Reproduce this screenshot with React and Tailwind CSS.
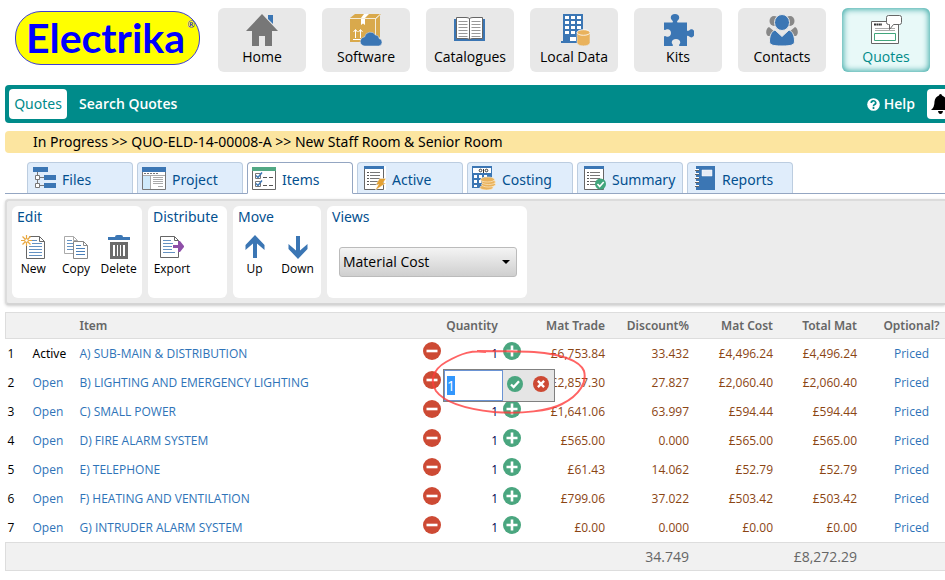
import { useEffect, useRef } from "react";

const BLUE = "#3b76b4";

/* ---------- main navigation icons (32 x 32) ---------- */

function HomeIcon() {
  return (
    <svg width="32" height="32" viewBox="0 0 32 32">
      <path d="M22 1h5v9l-5-5z" fill={BLUE} />
      <path d="M16 0 32 17h-6v15h-7V22h-6v10H6V17H0z" fill="#777" />
    </svg>
  );
}

function SoftwareIcon() {
  return (
    <svg width="32" height="32" viewBox="0 0 32 32">
      <path d="M5 0h26l-5 4H0z" fill="#d9a94c" />
      <path d="M0 5h25v23H0zM26 5l4-4v22l-4 4z" fill="#d9a94c" />
      <path d="M14 0h5l-4 4v7l-2-1.500-2 1.500V4z" fill="#fff" />
      <path d="M0 4.500h25.500L30 .5M25.500 5v20" stroke="#f5ecd8" fill="none" />
      <path d="M5.500 24v-8M3.500 18l2-2.500 2 2.500M10.500 24v-8M8.500 18l2-2.500 2 2.500M3 25.500h9" stroke="#fff" fill="none" />
      <path
        d="M15 32a4.500 4.500 0 0 1-.5-9 6 6 0 0 1 11-2 3.500 3.500 0 0 1 3.500 3.500A3.800 3.800 0 0 1 28.500 32z"
        fill={BLUE}
        stroke="#e8e8e8"
        strokeWidth="0.500"
      />
    </svg>
  );
}

function BookIcon() {
  return (
    <svg width="32" height="32" viewBox="0 0 32 32">
      <path d="M0 5h31v22H0z" fill={BLUE} />
      <path d="M3 3.500h9q3.500 0 3.500 1.500Q15.500 3.500 19 3.500h9.500v21H19q-3.500 0-3.500 1.500 0-1.500-3.500-1.500H2.500v-21z" fill="#fff" stroke="#666" />
      <path d="M15.500 5v20" stroke="#666" />
      <path d="M4.500 7.500h9M4.500 10.500h9M4.500 13.500h9M4.500 16.500h9M4.500 19.500h9M4.500 22.500h9M17.500 7.500h9M17.500 10.500h9M17.500 13.500h9M17.500 16.500h9M17.500 19.500h9M17.500 22.500h9" stroke="#999" />
    </svg>
  );
}

function LocalDataIcon() {
  return (
    <svg width="32" height="32" viewBox="0 0 32 32">
      <path d="M5 0h20v28H5zM3 27h16v2H3z" fill={BLUE} />
      <path
        d="M7 2h4v3H7zM13 2h4v3h-4zM19 2h4v3h-4zM7 7h4v3H7zM13 7h4v3h-4zM19 7h4v3h-4zM7 12h4v3H7zM13 12h4v3h-4zM19 12h4v3h-4zM7 17h4v3H7zM13 17h4v3h-4zM12 23h6v4h-6z"
        fill="#fff"
      />
      <path d="M19 18.500v10c0 4.500 13 4.500 13 0v-10z" fill="#e9b25c" stroke="#e8e8e8" strokeWidth="0.600" />
      <ellipse cx="25.500" cy="18.500" rx="6.500" ry="2.800" fill="#e9b25c" stroke="#fff" strokeWidth="0.800" />
    </svg>
  );
}

function KitsIcon() {
  return (
    <svg width="32" height="32" viewBox="0 0 32 32">
      <path
        d="M2 8.500h8.500c1-.7 0-1.600-.9-2.700C7.600 3 9.500 0 13 0s5.400 3 3.400 5.800c-.9 1.100-1.900 2-.9 2.700H25v8c1 1 2 0 3-.8 2-1.200 4.500 0 4.500 3.500s-2.500 5-4.500 3.800c-1-.8-2-1.800-3-.7V32h-7.500c-1-.9 0-1.800.5-2.600 1-2.400-1-4.400-4-4.400s-5 2-4 4.400c.5.800 1.500 1.700.5 2.600H2v-9.500c.8-1.300 1.700-.2 2.800.2 2.200.6 4.200-1.200 4.200-3.700s-2-4.300-4.200-3.700c-1.100.4-2 1.500-2.800.2z"
        fill={BLUE}
      />
    </svg>
  );
}

function ContactsIcon() {
  return (
    <svg width="32" height="32" viewBox="0 0 32 32">
      <g fill="#888">
        <ellipse cx="8" cy="7" rx="4.500" ry="5" />
        <ellipse cx="24" cy="7" rx="4.500" ry="5" />
        <path d="M3 13l6 5-4 4H2c-3-2-2-8 1-9zM29 13l-6 5 4 4h3c3-2 2-8-1-9z" />
      </g>
      <ellipse cx="16" cy="8.500" rx="7.500" ry="8" fill={BLUE} stroke="#e8e8e8" />
      <path d="M9 16l7 6.500 7-6.500c3 1 5.500 5 5.500 11 0 4-3 5-12.500 5S3.500 31 3.500 27c0-6 2.500-10 5.500-11z" fill={BLUE} stroke="#e8e8e8" />
    </svg>
  );
}

function QuotesIcon() {
  return (
    <svg width="32" height="32" viewBox="0 0 32 32">
      <path d="M1.500 7.500h27v22h-27z" fill="#fff" stroke="#666" />
      <path d="M4 10.500h8" stroke="#333" strokeWidth="2" strokeDasharray="2 .4" />
      <path d="M5 14.500h20M5 16.500h20" stroke="#aaa" />
      <path d="M4.500 19.500h21v7h-21z" fill="#fff" stroke="#41a67c" />
      <path d="M18.500 1.500h11q2 0 2 2v5q0 2-2 2h-6l-4 5v-5h-1q-2 0-2-2v-5q0-2 2-2z" fill="#fff" stroke="#666" />
    </svg>
  );
}

/* ---------- tab icons (24 x 24) ---------- */

function FilesIcon() {
  return (
    <svg width="24" height="24" viewBox="0 0 24 24">
      <path d="M1 1h15v5H1zM12 9h12v5H12zM12 17h12v5H12z" fill={BLUE} />
      <path d="M5.500 6v13M5.500 11.500H12M5.500 19.500H12" stroke="#777" fill="none" />
      <path d="M3.500 9.500h4v4h-4zM3.500 17.500h4v4h-4z" fill="#fff" stroke="#777" />
    </svg>
  );
}

function ProjectIcon() {
  return (
    <svg width="24" height="24" viewBox="0 0 24 24">
      <path d="M.5 1.500h23v22H.5z" fill="#fff" stroke="#777" />
      <path d="M0 1h24v5H0z" fill={BLUE} />
      <path d="M2 7.500h15" stroke="#777" strokeDasharray="2 1" />
      <path d="M1 10h7v13H1z" fill="#cfeafb" />
      <path d="M8.500 9v14M1 9.500h22" stroke="#aaa" />
      <path d="M11 11.500h10M11 13.500h10M11 15.500h10M11 17.500h10M16 20.500h5" stroke="#aaa" />
    </svg>
  );
}

function ItemsIcon() {
  return (
    <svg width="24" height="24" viewBox="0 0 24 24">
      <path d="M.5 1.500h23v22H.5z" fill="#fff" stroke="#666" />
      <path d="M0 1h24v4H0z" fill="#52a884" />
      <path d="M3.500 7.500h5v5h-5zM3.500 15.500h5v5h-5z" fill="#fff" stroke="#777" />
      <path d="M4 9.500l2 2 4-5M4 17.500l2 2 4-5" fill="none" stroke={BLUE} strokeWidth="1.500" />
      <path d="M11 11.500h10M11 19.500h10" stroke="#555" strokeDasharray="4 2" />
    </svg>
  );
}

function ListSheet() {
  return (
    <>
      <path d="M2.500 1.500h19v22h-19z" fill="#fff" stroke="#666" />
      <path d="M2 0h20v3H2z" fill={BLUE} />
      <path d="M8 6.500h10M8 9.500h10M8 12.500h10M8 15.500h10M8 18.500h8" stroke="#777" />
      <path d="M5 6.500h2M5 9.500h2M5 12.500h2M5 15.500h2M5 18.500h2" stroke="#555" />
    </>
  );
}

function ActiveIcon() {
  return (
    <svg width="24" height="24" viewBox="0 0 24 24">
      <path d="M22 0h2v24h-2z" fill="#fff" />
      <ListSheet />
      <path d="M17.500 12.500H24l-3 4.500h3L13 24.500l3.500-6H14z" fill="#e2a033" stroke="#fff" strokeWidth="0.400" />
    </svg>
  );
}

function CostingIcon() {
  return (
    <svg width="24" height="24" viewBox="0 0 24 24">
      <path d="M0 0h20v22H0z" fill={BLUE} />
      <path d="M1 2h18v5H1z" fill="#fff" />
      <circle cx="8.500" cy="4.500" r="1.300" fill="none" stroke="#333" />
      <circle cx="14.500" cy="4.500" r="1.300" fill="none" stroke="#333" />
      <path d="M11.500 3v4" stroke="#333" />
      <path d="M2 9h3v3H2zM7 9h3v3H7zM12 9h3v2h-3zM2 14h3v3H2zM7 14h2v3H7zM2 19h3v2H2z" fill="#fff" />
      <g fill="#e9b25c" stroke="#fbe9c8" strokeWidth="0.700">
        <ellipse cx="14.500" cy="21.500" rx="6.500" ry="2.500" />
        <ellipse cx="16.500" cy="18.500" rx="7" ry="2.500" />
        <ellipse cx="16.500" cy="16" rx="7" ry="2.500" />
        <ellipse cx="15.500" cy="13.500" rx="7" ry="2.500" />
      </g>
    </svg>
  );
}

function SummaryIcon() {
  return (
    <svg width="24" height="24" viewBox="0 0 24 24">
      <ListSheet />
      <circle cx="18.500" cy="18" r="5.500" fill="#41a67c" />
      <path d="M15.500 18l2.200 2.500 4-4.500" fill="none" stroke="#fff" strokeWidth="1.600" />
    </svg>
  );
}

function ReportsIcon() {
  return (
    <svg width="24" height="24" viewBox="0 0 24 24">
      <path d="M4 0h19v24H4z" fill={BLUE} />
      <path d="M10 4h10v6H10z" fill="#e6ecf5" stroke="#fff" strokeWidth="0.500" />
      <path d="M3 4h4M3 8h4M3 12h4M3 16h4M3 20h4" stroke="#666" strokeWidth="2" />
      <path d="M3 3.500h4M3 7.500h4M3 11.500h4M3 15.500h4M3 19.500h4" stroke="#fff" />
    </svg>
  );
}

/* ---------- toolbar icons (24 x 24) ---------- */

function NewIcon() {
  return (
    <svg width="24" height="24" viewBox="0 0 24 24">
      <path d="M5.500 1.500h13l5 5v17h-18z" fill="#fff" stroke="#666" />
      <path d="M18.500 1.500v5h5" fill="none" stroke="#666" />
      <path d="M11 5.500h5M11 8.500h10M8 11.500h13M8 14.500h13M8 17.500h13M8 20.500h13" stroke="#6592c2" />
      <circle cx="5.500" cy="5.500" r="5" fill="#fff" />
      <path d="M5.500 0v11M0 5.500h11M1.500 1.500l8 8M9.500 1.500l-8 8" stroke="#e9a840" strokeWidth="1.200" />
      <circle cx="5.500" cy="5.500" r="1.800" fill="#fff" stroke="#e9a840" />
    </svg>
  );
}

function CopyIcon() {
  return (
    <svg width="24" height="24" viewBox="0 0 24 24">
      <path d="M.5 1.500h9l4 4v13H.5z" fill="#fff" stroke="#aaa" />
      <path d="M9.500 1.500v4h4" fill="none" stroke="#aaa" />
      <path d="M3 5.500h5M3 8.500h6M3 11.500h6M3 14.500h6" stroke="#6592c2" />
      <path d="M9.500 6.500h10l4 4v13h-14z" fill="#fff" stroke="#888" />
      <path d="M19.500 6.500v4h4" fill="none" stroke="#888" />
      <path d="M12 10.500h5M12 13.500h9M12 16.500h9M12 19.500h9" stroke="#4a7fb8" />
    </svg>
  );
}

function DeleteIcon() {
  return (
    <svg width="24" height="24" viewBox="0 0 24 24">
      <path d="M1 2h7q0-2 2-2h4q2 0 2 2h7v3H1z" fill={BLUE} />
      <path d="M3 7h18v17H3z" fill="#6b6b6b" />
      <path d="M6 10h2v11H6zM10 10h1v11h-1zM13 10h1v11h-1zM16 10h2v11h-2z" fill="#fff" />
    </svg>
  );
}

function ExportIcon() {
  return (
    <svg width="24" height="24" viewBox="0 0 24 24">
      <path d="M.5 1.500h14l4 4v17H.5z" fill="#fff" stroke="#666" />
      <path d="M14.500 1.500v4h4" fill="none" stroke="#666" />
      <path d="M3 5.500h8M3 8.500h10M3 11.500h9M3 14.500h9M3 17.500h12" stroke="#6592c2" />
      <path d="M13 10h5V6h2l4.500 5.500-4.500 5.500h-2v-4h-5z" fill="#8e4fa8" />
    </svg>
  );
}

function ArrowIcon({ down }) {
  return (
    <svg width="24" height="24" viewBox="0 0 24 24" className={down ? "rotate-180" : ""}>
      <path d="M12 0l9.500 10v5L14 8.500V23h-4V8.500L2.500 15v-5z" fill={BLUE} />
    </svg>
  );
}

/* ---------- small round icons ---------- */

function RoundIcon({ kind, size = 18 }) {
  const colour = kind === "minus" || kind === "cancel" ? "#cd4a34" : "#4aa67f";
  const d = {
    minus: "M3.500 9h11",
    plus: "M3.500 9h11M9 3.500v11",
    ok: "M4.500 9.500l3 3 6-6.500",
    cancel: "M5.500 5.500l7 7M12.500 5.500l-7 7",
  }[kind];
  return (
    <svg width={size} height={size} viewBox="0 0 18 18">
      <circle cx="9" cy="9" r="9" fill={colour} />
      <path d={d} fill="none" stroke="#fff" strokeWidth="2.600" />
    </svg>
  );
}

/* ---------- data ---------- */

const NAV = [
  ["Home", HomeIcon],
  ["Software", SoftwareIcon],
  ["Catalogues", BookIcon],
  ["Local Data", LocalDataIcon],
  ["Kits", KitsIcon],
  ["Contacts", ContactsIcon],
  ["Quotes", QuotesIcon],
];

const TABS = [
  ["Files", FilesIcon],
  ["Project", ProjectIcon],
  ["Items", ItemsIcon],
  ["Active", ActiveIcon],
  ["Costing", CostingIcon],
  ["Summary", SummaryIcon],
  ["Reports", ReportsIcon],
];

const ROWS = [
  ["A) SUB-MAIN & DISTRIBUTION", "£6,753.84", "33.432", "£4,496.24"],
  ["B) LIGHTING AND EMERGENCY LIGHTING", "£2,857.30", "27.827", "£2,060.40"],
  ["C) SMALL POWER", "£1,641.06", "63.997", "£594.44"],
  ["D) FIRE ALARM SYSTEM", "£565.00", "0.000", "£565.00"],
  ["E) TELEPHONE", "£61.43", "14.062", "£52.79"],
  ["F) HEATING AND VENTILATION", "£799.06", "37.022", "£503.42"],
  ["G) INTRUDER ALARM SYSTEM", "£0.00", "0.000", "£0.00"],
];

/* ---------- components ---------- */

function Header() {
  return (
    <header className="flex items-start pl-[15px] pt-2">
      <a
        href="#home"
        aria-label="Electrika"
        className="relative mt-[3px] flex h-[54px] w-[185px] shrink-0 items-center rounded-[26px] border border-[#4040d0] bg-[#ffff00] pl-2.5 font-['Lato'] text-[41px] font-bold leading-[52px] text-[#0000ff]"
      >
        Electrika
        <span className="absolute right-1 top-2 text-[9px] font-normal leading-[10px]">®</span>
      </a>
      <nav className="ml-[18px] flex gap-4">
        {NAV.map(([label, Icon]) => (
          <a
            key={label}
            href={"#" + label}
            className={
              "flex h-16 w-[88px] shrink-0 flex-col items-center rounded-md pt-1.5 text-sm leading-[22px] " +
              (label === "Quotes"
                ? "bg-[#e8f9f8] text-[#008b8a] shadow-[inset_0_0_6px_1px_#2fa3a0]"
                : "bg-[#e8e8e8] text-black")
            }
          >
            <Icon />
            {label}
          </a>
        ))}
      </nav>
    </header>
  );
}

function QuotesBar() {
  return (
    <div className="mt-[13px] flex h-[38px] items-center rounded-l bg-[#008b8a] pl-1 text-sm font-semibold text-white">
      <a href="#quotes" className="flex h-[30px] w-[58px] items-center justify-center rounded bg-white font-['Noto_Sans'] font-normal text-[#008b8a]">
        Quotes
      </a>
      <a href="#search" className="ml-3">
        Search Quotes
      </a>
      <a href="#help" className="ml-auto flex items-center gap-1">
        <svg width="13" height="13" viewBox="0 0 13 13">
          <circle cx="6.500" cy="6.500" r="6.300" fill="#fff" />
          <path d="M4.300 5a2.200 2 0 1 1 3.300 1.500Q6.500 7 6.500 8.200M6.500 9v2" fill="none" stroke="#008b8a" strokeWidth="1.700" />
        </svg>
        Help
      </a>
      <button type="button" aria-label="Notifications" className="ml-3 flex h-[30px] w-[18px] items-center overflow-hidden rounded-l bg-white pl-1">
        <svg width="20" height="20" viewBox="0 0 20 20" className="shrink-0">
          <path d="M9.500 0q1.500 0 1.500 1.500 4 1.500 4.500 6 0 6 3.500 8.500H0q3.500-2.500 3.500-8.500Q4 3 8 1.500 8 0 9.500 0zM7 17h5q-.5 3-2.500 3T7 17z" fill="#000" />
        </svg>
      </button>
    </div>
  );
}

function Tabs() {
  return (
    <nav className="mt-[9px] flex gap-1 border-b border-[#94a6c2] pl-[22px]">
      {TABS.map(([label, Icon]) => (
        <a
          key={label}
          href={"#" + label}
          className={
            "flex w-[106px] shrink-0 items-center gap-1.5 rounded-t border pl-1 font-['Noto_Sans'] text-sm text-[#03508f] " +
            (label === "Items" ? "-mb-px h-8 border-[#94a6c2] border-b-white bg-white" : "h-[31px] border-b-0 border-[#bccde0] bg-[#e0edfb]")
          }
        >
          <Icon />
          <span className="pt-[3px]">{label}</span>
        </a>
      ))}
    </nav>
  );
}

function Card({ title, className, children }) {
  return (
    <section className={"h-[92px] shrink-0 rounded-md bg-white pt-px " + className}>
      <h2 className="pl-[5px] font-['Noto_Sans'] text-sm leading-5 text-[#03508f]">{title}</h2>
      {children}
    </section>
  );
}

function Tool({ label, children }) {
  return (
    <button type="button" className="flex flex-col items-center text-xs leading-5 text-black">
      {children}
      {label}
    </button>
  );
}

function Toolbar() {
  return (
    <div className="mt-[5px] flex gap-1.5 rounded-l border-y-2 border-l-2 border-t-[#dcdcdc] border-b-[#d4d4d4] border-l-[#dcdcdc] bg-[#ececec] p-[5px] shadow-[0_1px_3px_#ccc]">
      <Card title="Edit" className="w-[130px]">
        <div className="mt-2 grid grid-cols-3 pr-0.5">
          <Tool label="New"><NewIcon /></Tool>
          <Tool label="Copy"><CopyIcon /></Tool>
          <Tool label="Delete"><DeleteIcon /></Tool>
        </div>
      </Card>
      <Card title="Distribute" className="w-[79px]">
        <div className="mt-2 grid w-12">
          <Tool label="Export"><ExportIcon /></Tool>
        </div>
      </Card>
      <Card title="Move" className="w-[88px]">
        <div className="mt-2 grid grid-cols-2 pr-0.5">
          <Tool label="Up"><ArrowIcon /></Tool>
          <Tool label="Down"><ArrowIcon down /></Tool>
        </div>
      </Card>
      <Card title="Views" className="w-[200px]">
        <div className="relative mx-3 mt-5 w-[178px]">
          <select
            aria-label="Views"
            className="h-[30px] w-full appearance-none rounded-[3px] border border-[#bbb] bg-linear-to-b from-[#f4f4f4] to-[#cfcfcf] pl-[3px] text-sm text-black"
          >
            <option>Material Cost</option>
          </select>
          <svg width="8" height="4" viewBox="0 0 8 4" className="pointer-events-none absolute right-[7px] top-[13px]">
            <path d="M0 0h8L4 4z" />
          </svg>
        </div>
      </Card>
    </div>
  );
}

function QuantityEditor() {
  const box = useRef(null);
  useEffect(() => {
    box.current.focus();
    box.current.select();
  }, []);
  return (
    <div className="absolute left-[23px] top-px z-10 flex h-[33px] w-28 items-center border border-[#808080] bg-[#e5e5e5]">
      <input
        ref={box}
        aria-label="Quantity"
        defaultValue="1"
        className="h-full w-[59px] border border-[#6a93d4] bg-white pl-0.5 text-sm text-black outline-none selection:bg-[#3297fd] selection:text-white"
      />
      <div className="flex flex-1 justify-between pb-1 pl-1 pr-[5px]">
        <button type="button" aria-label="Save"><RoundIcon kind="ok" size={16} /></button>
        <button type="button" aria-label="Cancel"><RoundIcon kind="cancel" size={16} /></button>
      </div>
    </div>
  );
}

function ItemsTable() {
  const num = "pr-1.5 text-right text-[#8b4513]";
  const head = "pr-1.5 text-right font-semibold";
  return (
    <div className="relative mt-[7px]">
      <table className="w-full table-fixed border-collapse text-xs">
        <colgroup>
          <col className="w-[21px]" />
          <col className="w-[47px]" />
          <col />
          <col className="w-[107px]" />
          <col className="w-[84px]" />
          <col className="w-[84px]" />
          <col className="w-[84px]" />
          <col className="w-[84px]" />
          <col className="w-[82px]" />
        </colgroup>
        <thead>
          <tr className="h-[26px] border border-r-0 border-[#ddd] bg-[#f1f1f1] font-['Noto_Sans'] text-[#666]">
            <th />
            <th />
            <th className="pl-1.5 text-left font-semibold">Item</th>
            <th className="pr-[3px] font-semibold">Quantity</th>
            <th className={head}>Mat Trade</th>
            <th className={head}>Discount%</th>
            <th className={head}>Mat Cost</th>
            <th className={head}>Total Mat</th>
            <th className="pl-[15px] font-semibold">Optional?</th>
          </tr>
        </thead>
        <tbody>
          {ROWS.map(([item, trade, discount, cost], i) => (
            <tr key={item} className="h-[29px]">
              <td className="pl-0.5">{i + 1}</td>
              <td className="pl-1.5">
                {i === 0 ? <span className="font-['Noto_Sans'] text-black">Active</span> : <a href="#open" className="text-[#2e73b8]">Open</a>}
              </td>
              <td className="whitespace-nowrap pl-1.5">
                <a href="#item" className="text-[#2e73b8]">{item}</a>
              </td>
              <td className="relative">
                <div className="flex h-[29px] items-center pl-[3px] text-[#000050]">
                  <button type="button" aria-label="Decrease" className="mb-1.5"><RoundIcon kind="minus" /></button>
                  <span className="w-[57px] text-right">1</span>
                  <button type="button" aria-label="Increase" className="mb-1.5 ml-[5px]"><RoundIcon kind="plus" /></button>
                </div>
                {i === 1 && <QuantityEditor />}
              </td>
              <td className={num}>{trade}</td>
              <td className={num}>{discount}</td>
              <td className={num}>{cost}</td>
              <td className={num}>{cost}</td>
              <td className="pl-[15px] text-center">
                <a href="#priced" className="text-[#2e73b8]">Priced</a>
              </td>
            </tr>
          ))}
        </tbody>
        <tfoot>
          <tr className="h-7 border border-r-0 border-[#ddd] bg-[#f1f1f1] text-sm text-[#666]">
            <td colSpan="5" />
            <td className="pr-1.5 text-right">34.749</td>
            <td />
            <td className="pr-1.5 text-right">£8,272.29</td>
            <td />
          </tr>
        </tfoot>
      </table>
      {/* hand-drawn ring around the quantity editor */}
      <svg width="160" height="70" viewBox="0 0 160 70" className="pointer-events-none absolute right-[357px] top-9 z-20">
        <path
          d="M58 4C44 2 34 5 18 14 4 22 2 34 8 43c8 11 30 18 58 21 28 2 55-1 68-8 18-9 25-22 22-33-5-12-26-17-50-19-18-1-36-1-57-1"
          fill="none"
          stroke="#ff3c3c"
          strokeOpacity="0.800"
          strokeWidth="2"
        />
      </svg>
    </div>
  );
}

export default function App() {
  return (
    <div className="min-h-screen overflow-hidden bg-white font-['Open_Sans','Noto_Sans',sans-serif]">
      <Header />
      <main className="pl-[5px]">
        <QuotesBar />
        <div className="mt-2 h-[22px] rounded-l bg-[#fce5a0] pl-7 font-['Noto_Sans'] text-sm leading-[22px] text-black">
          In Progress &gt;&gt; QUO-ELD-14-00008-A &gt;&gt; New Staff Room &amp; Senior Room
        </div>
        <Tabs />
        <Toolbar />
        <ItemsTable />
      </main>
    </div>
  );
}
